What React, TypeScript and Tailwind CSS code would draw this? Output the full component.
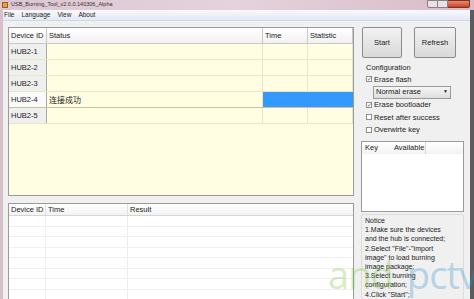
import React from 'react';

const font = { fontFamily: '"Liberation Sans", Arial, sans-serif' };

const hubs = ['HUB2-1', 'HUB2-2', 'HUB2-3', 'HUB2-4', 'HUB2-5'];

const notice = [
  '1.Make sure the devices',
  'and the hub is connected;',
  '2.Select "File"-"Import',
  'image" to load burning',
  'image package;',
  '3.Select burning',
  'configuration;',
  '4.Click "Start";',
];

function Check({ label, checked }: { label: string; checked?: boolean }) {
  return (
    <div className="flex items-center gap-[2px] h-[12.5px]">
      <span className="w-[6px] h-[6px] border border-[#8e8f8f] bg-white flex items-center justify-center text-[6px] leading-none text-[#555]">
        {checked ? '✓' : ''}
      </span>
      <span>{label}</span>
    </div>
  );
}

export default function App() {
  return (
    <div
      className="w-[474px] h-[299px] overflow-hidden relative flex flex-col bg-[#d9c3cf] text-[7.5px] text-[#222]"
      style={font}
    >
      {/* title bar */}
      <div className="h-[10px] shrink-0 flex items-center bg-gradient-to-r from-[#dcc6d2] via-[#e5d2dc] to-[#d8bcc8]">
        <span className="ml-[2px] w-[6px] h-[6px] bg-[#e2a23c] border border-[#a0601a]" />
        <span className="ml-[3px] text-[5.5px] text-[#333] leading-none">USB_Burning_Tool_v2.0.0.140306_Alpha</span>
        <div className="ml-auto mr-[4px] flex h-[9px] self-start">
          <span className="w-[11px] h-[8px] bg-[#e9e1e6] border border-[#8a7f86] rounded-bl-[2px]" />
          <span className="w-[10px] h-[8px] bg-[#e9e1e6] border-y border-r border-[#8a7f86]" />
          <span className="w-[22px] h-[8px] bg-gradient-to-b from-[#e88a6a] to-[#c7412a] border-y border-r border-[#7a3326] rounded-br-[2px]" />
        </div>
      </div>

      <div className="flex flex-1 min-h-0">
        <div className="w-[3px] bg-[#d4bfcb]" />
        <div className="flex-1 flex flex-col bg-[#f0f0f0] min-w-0">
          {/* menu bar */}
          <div className="h-[11px] shrink-0 flex items-center gap-[7px] px-[1px] text-[6.5px] bg-gradient-to-b from-[#f8f9fc] to-[#e4e9f3] border-b border-[#d3d9e4]">
            <span>File</span>
            <span>Language</span>
            <span>View</span>
            <span>About</span>
          </div>

          <div className="flex flex-1 min-h-0 pl-[5px] pt-[6px] gap-[7px]">
            {/* left column */}
            <div className="w-[346px] flex flex-col gap-[7px]">
              <div className="h-[169px] shrink-0 border border-[#9a9a9a] bg-[#fffee3] flex flex-col">
                <div className="grid grid-cols-[38px_216px_45px_45px] h-[16px] shrink-0 bg-gradient-to-b from-white to-[#f2f2f2] border-b border-[#c8c8c8]">
                  <div className="px-[2px] flex items-center border-r border-[#c8c8c8]">Device ID</div>
                  <div className="px-[2px] flex items-center border-r border-[#c8c8c8]">Status</div>
                  <div className="px-[2px] flex items-center border-r border-[#c8c8c8]">Time</div>
                  <div className="px-[2px] flex items-center border-r border-[#c8c8c8]">Statistic</div>
                </div>
                {hubs.map((h, i) => {
                  const cur = i === 3;
                  return (
                    <div
                      key={h}
                      className={`grid grid-cols-[38px_216px_45px_45px] h-[16px] shrink-0 border-b ${cur ? 'border-[#c9c39a]' : 'border-[#e9e5c6]'}`}
                    >
                      <div className={`px-[2px] flex items-center border-r border-[#a8a8a8] ${cur ? 'bg-[#fafafa]' : 'bg-[#efefef]'}`}>{h}</div>
                      <div className="px-[2px] flex items-center border-r border-[#e9e5c6] text-[8px]" style={{ fontFamily: '"Noto Sans CJK SC", sans-serif' }}>
                        {cur ? '连接成功' : ''}
                      </div>
                      <div className={`border-r ${cur ? 'bg-[#3399ff] border-[#3399ff]' : 'border-[#e9e5c6]'}`} />
                      <div className={`border-r ${cur ? 'bg-[#3399ff] border-[#3399ff]' : 'border-[#e9e5c6]'}`} />
                    </div>
                  );
                })}
              </div>

              <div className="flex-1 border border-[#9a9a9a] bg-white flex flex-col">
                <div className="grid grid-cols-[37px_82px_1fr] h-[12px] shrink-0 bg-gradient-to-b from-white to-[#f3f3f3] border-b border-[#d5d5d5]">
                  <div className="px-[2px] flex items-center whitespace-nowrap border-r border-[#e2e2e2]">Device ID</div>
                  <div className="px-[2px] flex items-center border-r border-[#e2e2e2]">Time</div>
                  <div className="px-[2px] flex items-center">Result</div>
                </div>
                {Array.from({ length: 8 }).map((_, i) => (
                  <div key={i} className="grid grid-cols-[37px_82px_1fr] h-[10.5px] shrink-0 border-b border-[#f0f0f0]">
                    <div className="border-r border-[#f0f0f0]" />
                    <div className="border-r border-[#ececec]" />
                    <div />
                  </div>
                ))}
              </div>
            </div>

            {/* right column */}
            <div className="w-[103px] flex flex-col">
              <div className="flex gap-[12px] pl-[1px] shrink-0">
                <button className="w-[40px] h-[31px] border border-[#8c8c8c] rounded-[2px] bg-gradient-to-b from-[#f2f2f2] to-[#d9d9d9]">Start</button>
                <button className="w-[42px] h-[31px] border border-[#8c8c8c] rounded-[2px] bg-gradient-to-b from-[#f2f2f2] to-[#d9d9d9]">Refresh</button>
              </div>
              <div className="pl-[5px] mt-[4px] shrink-0">
                <div className="h-[11px] flex items-center">Configuration</div>
                <Check label="Erase flash" checked />
                <div className="ml-[7px] w-[78px] h-[13px] border border-[#9a9a9a] bg-gradient-to-b from-[#f6f6f6] to-[#dedede] flex items-center px-[2px]">
                  <span>Normal erase</span>
                  <span className="ml-auto text-[5px]">▼</span>
                </div>
                <Check label="Erase bootloader" checked />
                <Check label="Reset after success" />
                <Check label="Overwirte key" />
              </div>
              <div className="mt-[5px] h-[71px] shrink-0 border border-[#9a9a9a] bg-white">
                <div className="flex h-[12px] items-center bg-gradient-to-b from-white to-[#f3f3f3]">
                  <span className="w-[30px] pl-[3px]">Key</span>
                  <span className="w-[34px] border-r border-[#d5d5d5] pl-[2px]">Available</span>
                </div>
              </div>
              <div className="mt-[2px] shrink-0 border border-[#dcdcdc] rounded-[2px] pl-[3px] pt-[1px] text-[7px] leading-[9.2px]">
                <div>Notice</div>
                {notice.map((n) => (
                  <div key={n} className="whitespace-nowrap">{n}</div>
                ))}
              </div>
            </div>
          </div>
        </div>
        <div className="w-[4px] bg-[#5c5a5e]" />
      </div>

      {/* watermark */}
      <div className="absolute left-[328px] top-[255px] flex gap-[14px] text-[38px] leading-none tracking-tight opacity-30 pointer-events-none" style={{ fontFamily: '"Open Sans", sans-serif' }}>
        <span className="text-[#7cc243]">and</span>
        <span className="text-[#2f8fd0]">pctv</span>
      </div>
    </div>
  );
}
